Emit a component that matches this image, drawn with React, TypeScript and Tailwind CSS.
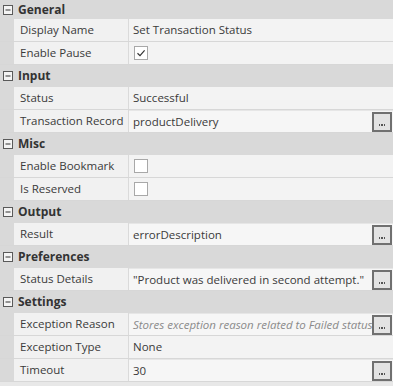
import React from "react";

type Prop = {
  name: string;
  value?: string;
  kind?: "text" | "check" | "uncheck";
  button?: boolean;
  italic?: boolean;
};

type Section = { title: string; props: Prop[] };

const sections: Section[] = [
  {
    title: "General",
    props: [
      { name: "Display Name", value: "Set Transaction Status" },
      { name: "Enable Pause", kind: "check" },
    ],
  },
  {
    title: "Input",
    props: [
      { name: "Status", value: "Successful" },
      { name: "Transaction Record", value: "productDelivery", button: true },
    ],
  },
  {
    title: "Misc",
    props: [
      { name: "Enable Bookmark", kind: "uncheck" },
      { name: "Is Reserved", kind: "uncheck" },
    ],
  },
  {
    title: "Output",
    props: [{ name: "Result", value: "errorDescription", button: true }],
  },
  {
    title: "Preferences",
    props: [
      {
        name: "Status Details",
        value: "\"Product was delivered in second attempt.\"",
        button: true,
      },
    ],
  },
  {
    title: "Settings",
    props: [
      {
        name: "Exception Reason",
        value: "Stores exception reason related to Failed status",
        button: true,
        italic: true,
      },
      { name: "Exception Type", value: "None" },
      { name: "Timeout", value: "30", button: true },
    ],
  },
];

function MinusBox() {
  return (
    <svg width="10" height="10" viewBox="0 0 10 10" className="shrink-0">
      <rect x="0.5" y="0.5" width="9" height="9" fill="#f4f4f4" stroke="#5a5a5a" strokeWidth="1" />
      <line x1="2.5" y1="5" x2="7.5" y2="5" stroke="#333" strokeWidth="1" />
    </svg>
  );
}

function CheckBox({ checked }: { checked: boolean }) {
  return (
    <div className="w-[14px] h-[14px] bg-white border border-[#a8a8a8] flex items-center justify-center">
      {checked && (
        <svg width="10" height="10" viewBox="0 0 10 10">
          <path d="M1.5 5.2 L4 7.6 L8.6 2.4" fill="none" stroke="#333" strokeWidth="1.2" />
        </svg>
      )}
    </div>
  );
}

function DotsButton() {
  return (
    <div className="w-[20px] h-[20px] shrink-0 mr-[1px] border-2 border-[#707070] bg-[#e3e3e3] flex items-end justify-center pb-[4px]">
      <div className="flex gap-[1px]">
        <span className="w-[1.5px] h-[1.5px] bg-[#555]" />
        <span className="w-[1.5px] h-[1.5px] bg-[#555]" />
        <span className="w-[1.5px] h-[1.5px] bg-[#555]" />
      </div>
    </div>
  );
}

function PropRow({ p }: { p: Prop }) {
  return (
    <div className="flex h-[23px] border-b border-[#d7d7d7]">
      <div className="w-[14px] shrink-0 bg-[#d9d9d9]" />
      <div className="w-[115px] shrink-0 bg-[#f1f1f1] flex items-center pl-[6px] border-r border-[#dadada] overflow-hidden">
        <span className="whitespace-nowrap">{p.name}</span>
      </div>
      <div
        className={
          p.button
            ? "flex-1 min-w-0 bg-[#f6f6f6] flex items-center border-t border-[#e6e6e6]"
            : "flex-1 min-w-0 bg-[#f3f3f3] flex items-center"
        }
      >
        {p.kind === "check" || p.kind === "uncheck" ? (
          <div className="pl-[5px]">
            <CheckBox checked={p.kind === "check"} />
          </div>
        ) : (
          <>
            <div className="flex-1 min-w-0 overflow-hidden pl-[4px] pr-[4px]">
              <span
                className={
                  p.italic
                    ? "whitespace-nowrap italic text-[#8a8a8a]"
                    : "whitespace-nowrap"
                }
              >
                {p.value}
              </span>
            </div>
            {p.button && <DotsButton />}
          </>
        )}
      </div>
    </div>
  );
}

function Header({ title, first }: { title: string; first: boolean }) {
  return (
    <div
      className={
        first
          ? "flex items-center h-[19px] bg-[#d9d9d9] pl-[3px] gap-[5px]"
          : "flex items-center h-[22px] bg-[#d9d9d9] pl-[3px] gap-[5px]"
      }
    >
      <MinusBox />
      <span className="font-bold text-[#333] text-[12px]">{title}</span>
    </div>
  );
}

export default function App() {
  return (
    <div
      className="w-[393px] h-[386px] overflow-hidden bg-[#e8e8e8] text-[11.5px] text-[#3a3a3a] leading-[16px]"
      style={{ fontFamily: '"Open Sans", "Noto Sans", sans-serif' }}
    >
      {sections.map((s, i) => (
        <div key={s.title}>
          <Header title={s.title} first={i === 0} />
          {s.props.map((p) => (
            <PropRow key={p.name} p={p} />
          ))}
        </div>
      ))}
    </div>
  );
}
